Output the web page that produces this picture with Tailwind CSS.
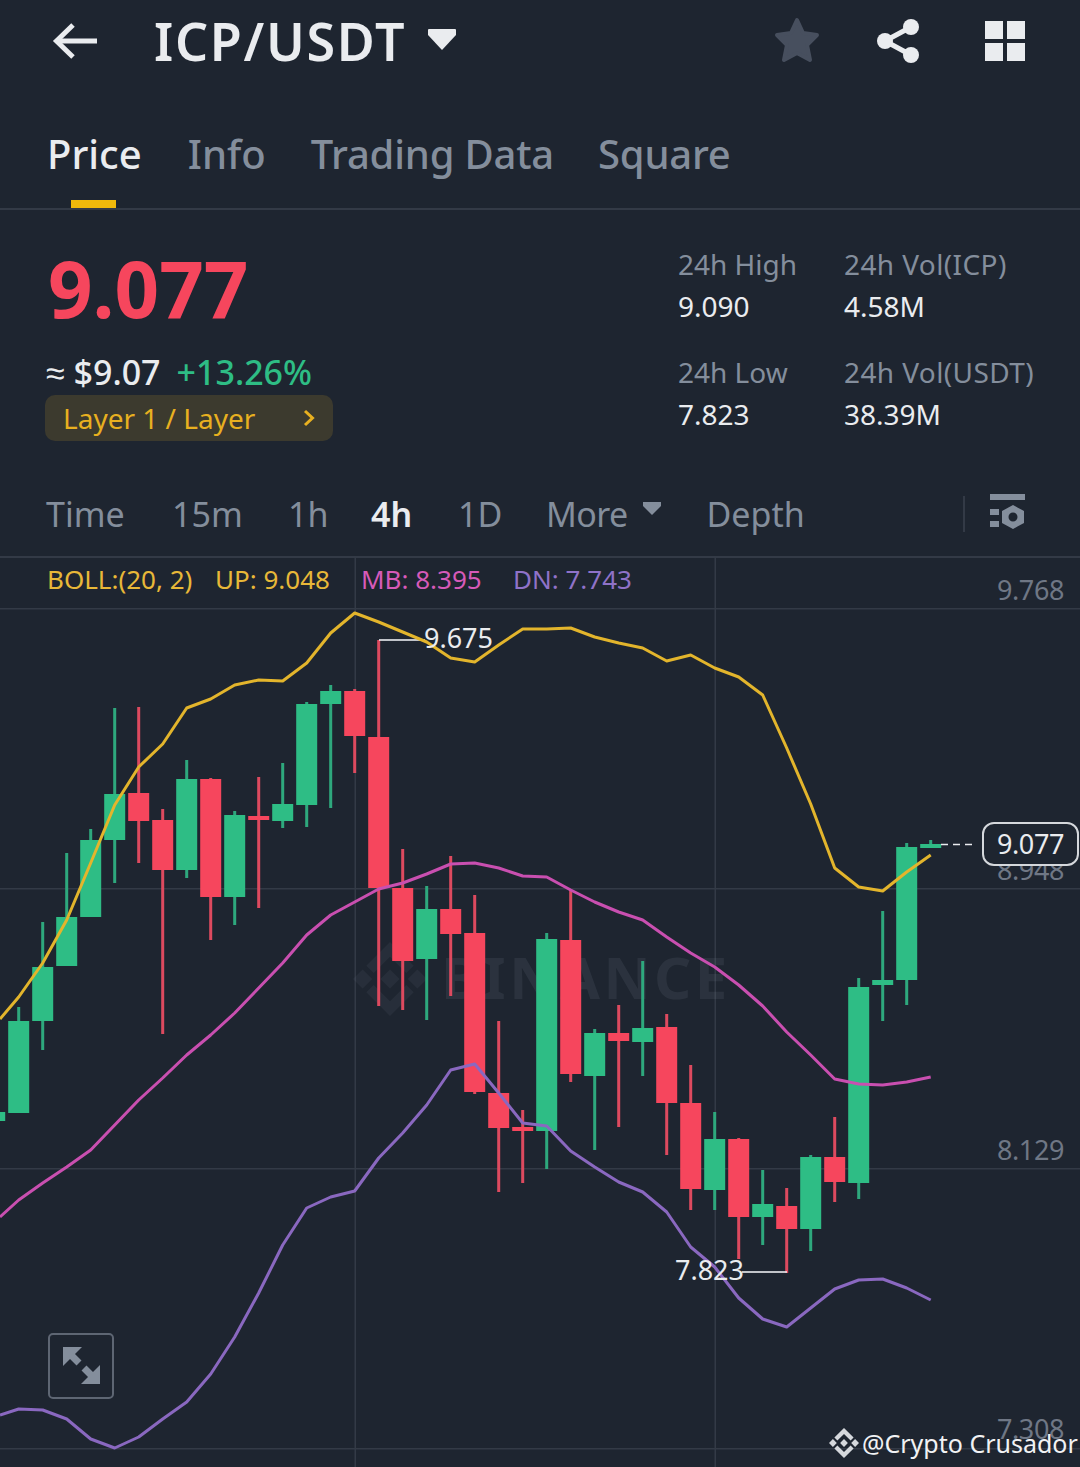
<!DOCTYPE html>
<html lang="en">

<head>
    <meta charset="UTF-8">
    <meta name="viewport" content="width=device-width, initial-scale=1.0">
    <title>ICP/USDT | Binance</title>
    <script src="https://cdn.jsdelivr.net/npm/@tailwindcss/browser@4"></script>
</head>

<body class="bg-[#1e2530] text-[#eaecef] font-['Noto_Sans',sans-serif] w-[1080px] h-[1467px] overflow-hidden">

    <!-- Header -->
    <header class="flex items-center h-[82px] pl-[52px] pr-[55px]">
        <svg class="w-[46px] h-[36px]" viewBox="0 0 46 36" fill="none" stroke="#eaecef" stroke-width="5">
            <path d="M45 18H5" />
            <path d="M21 2 4.500 18 21 34" />
        </svg>
        <h1 class="ml-[56px] text-[52px] font-semibold leading-none tracking-[1.7px]">ICP/USDT</h1>
        <svg class="ml-[22px] mb-[4px] w-[28px] h-[21px]" viewBox="0 0 28 21" fill="#eaecef">
            <path d="M1 0H27a1 1 0 0 1 1 1V6L14 21 0 6V1a1 1 0 0 1 1-1Z" />
        </svg>
        <div class="ml-auto flex items-center">
            <svg class="mb-[2px] w-[46px] h-[46px]" viewBox="0 0 46 46" fill="#474f5e" stroke="#474f5e" stroke-width="4" stroke-linejoin="round">
                <path d="M23 3 29 16 43 18 33 28 36 43 23 36 10 43 13 28 3 18 17 16Z" />
            </svg>
            <svg class="ml-[56px] w-[44px] h-[46px]" viewBox="0 0 44 46" fill="#eaecef" stroke="#eaecef">
                <path d="M9 23 35 9M9 23 35 37" stroke-width="5" />
                <circle cx="9" cy="23" r="8" stroke="none" />
                <circle cx="35" cy="9" r="8" stroke="none" />
                <circle cx="35" cy="37" r="8" stroke="none" />
            </svg>
            <div class="ml-[65px] grid grid-cols-2 gap-[4px]">
                <div class="w-[18px] h-[18px] bg-[#eaecef]"></div>
                <div class="w-[18px] h-[18px] bg-[#eaecef]"></div>
                <div class="w-[18px] h-[18px] bg-[#eaecef]"></div>
                <div class="w-[18px] h-[18px] bg-[#eaecef]"></div>
            </div>
        </div>
    </header>

    <!-- Tabs -->
    <nav class="relative flex items-center h-[128px] pt-[18px] pl-[47px] border-b-2 border-[#333a46] text-[40px] text-[#848e9c] font-medium">
        <a class="text-[#eaecef]">Price</a>
        <a class="ml-[46px]">Info</a>
        <a class="ml-[45px] tracking-[-0.2px]">Trading Data</a>
        <a class="ml-[44px] tracking-[-0.2px]">Square</a>
        <span class="absolute left-[71px] top-[118px] w-[45px] h-[8px] bg-[#f0b90b]"></span>
    </nav>

    <!-- Price stats -->
    <section class="flex h-[278px]">
        <div class="w-[678px] pl-[46px]">
            <div class="mt-[28px] ml-[2px] text-[78px] leading-[100px] font-bold text-[#f6465d]">9.077</div>
            <div class="mt-[14px] flex items-center h-[40px] text-[34px] font-medium">
                <span>≈ $9.07</span>
                <span class="ml-[16px] text-[#2ebd85]">+13.26%</span>
            </div>
            <div class="mt-[3px] -ml-[1px] flex items-center justify-between w-[288px] h-[46px] pl-[18px] pr-[18px] rounded-[10px] bg-[#3c3a2e] text-[28px] text-[#e8b020]">
                <span>Layer 1 / Layer</span>
                <svg class="w-[12px] h-[18px]" viewBox="0 0 12 18" fill="none" stroke="#e8b020" stroke-width="3">
                    <path d="M2 2 9.500 9 2 16" />
                </svg>
            </div>
        </div>
        <div class="grid grid-cols-[166px_auto] grid-rows-[108px_108px] pt-[34px] text-[28px] leading-[40px]">
            <div>
                <p class="text-[#848e9c]">24h High</p>
                <p class="mt-[2px]">9.090</p>
            </div>
            <div>
                <p class="text-[#848e9c] tracking-[0.4px]">24h Vol(ICP)</p>
                <p class="mt-[2px]">4.58M</p>
            </div>
            <div>
                <p class="text-[#848e9c]">24h Low</p>
                <p class="mt-[2px]">7.823</p>
            </div>
            <div>
                <p class="text-[#848e9c] tracking-[0.4px]">24h Vol(USDT)</p>
                <p class="mt-[2px]">38.39M</p>
            </div>
        </div>
    </section>

    <!-- Interval toolbar -->
    <div class="flex items-center h-[70px] pb-[16px] pl-[46px] pr-[54px] border-b-2 border-[#333a46] text-[34px] text-[#848e9c]">
        <span class="w-[126px]">Time</span>
        <span class="w-[116px]">15m</span>
        <span class="w-[83px]">1h</span>
        <span class="w-[87px] font-semibold text-[#eaecef]">4h</span>
        <span class="w-[88px]">1D</span>
        <span class="tracking-[-0.6px]">More</span>
        <svg class="ml-[15px] mb-[11px] w-[18px] h-[13px]" viewBox="0 0 18 13" fill="#848e9c">
            <path d="M0 0H18V4L9 13 0 4Z" />
        </svg>
        <span class="ml-[46px]">Depth</span>
        <div class="ml-auto w-[2px] h-[36px] bg-[#333a46]"></div>
        <svg class="ml-[25px] mb-[4px] w-[36px] h-[36px]" viewBox="0 0 36 36" fill="#848e9c">
            <rect x="0" y="0" width="35" height="6" />
            <rect x="0" y="15" width="9" height="6" />
            <rect x="0" y="27" width="9" height="6" />
            <path fill-rule="evenodd" d="M23 11 34 17V29L23 35 12 29V17ZM23 18.500a4.500 4.500 0 1 0 0 9 4.500 4.500 0 0 0 0-9Z" />
        </svg>
    </div>

    <!-- Chart -->
    <section class="relative h-[909px] overflow-hidden">
        <svg id="chart" class="absolute inset-0 w-[1080px] h-[909px]" viewBox="0 558 1080 909">
            <g fill="#848e9c" opacity="0.09" id="mark">
                <!-- Binance logo watermark -->
                <g transform="translate(390 979) scale(0.74)">
                    <path d="M0-13 13 0 0 13-13 0Z" />
                    <path d="M-37-13-24 0-37 13-50 0Z" />
                    <path d="M37-13 50 0 37 13 24 0Z" />
                    <path d="M0-50 32-18 22-8 0-30-22-8-32-18Z" />
                    <path d="M0 50 32 18 22 8 0 30-22 8-32 18Z" />
                </g>
            </g>
            <text x="441" y="999" font-family="Noto Sans" font-weight="700" font-size="58" letter-spacing="3.500" fill="#848e9c" opacity="0.13">BINANCE</text>
        </svg>

        <!-- Legend -->
        <div class="absolute left-[47px] top-[6px] flex text-[26px] leading-[30px]">
            <span class="w-[168px] text-[#e8b838]">BOLL:(20, 2)</span>
            <span class="w-[146px] text-[#e8b838]">UP: 9.048</span>
            <span class="w-[152px] text-[#d65ab8]">MB: 8.395</span>
            <span class="text-[#8f72c8]">DN: 7.743</span>
        </div>

        <!-- Price axis -->
        <span class="absolute right-[16px] top-[15px] text-[27px] leading-[34px] tracking-[-0.4px] text-[#6f7785]">9.768</span>
        <span class="absolute right-[16px] top-[295px] text-[27px] leading-[34px] tracking-[-0.4px] text-[#6f7785]">8.948</span>
        <span class="absolute right-[16px] top-[575px] text-[27px] leading-[34px] tracking-[-0.4px] text-[#6f7785]">8.129</span>
        <span class="absolute right-[16px] top-[854px] text-[27px] leading-[34px] tracking-[-0.4px] text-[#6f7785]">7.308</span>

        <!-- High / low markers -->
        <span class="absolute left-[424px] top-[63px] text-[27px] leading-[34px]">9.675</span>
        <span class="absolute left-[675px] top-[695px] text-[27px] leading-[34px]">7.823</span>

        <!-- Last price tag -->
        <div class="absolute left-[982px] top-[264px] flex items-center justify-center w-[97px] h-[44px] rounded-[12px] border-2 border-[#d5d8dc] bg-[#1e2530] text-[27px] tracking-[-0.4px]">9.077</div>

        <!-- Fullscreen button -->
        <button class="absolute left-[48px] top-[775px] w-[66px] h-[66px] rounded-[5px] border-2 border-[#5e6673]">
            <svg class="w-[62px] h-[62px]" viewBox="0 0 62 62" fill="#848e9c" stroke="#848e9c">
                <path d="M13 12H32L13 31Z" stroke="none" />
                <path d="M50 49H31L50 30Z" stroke="none" />
                <path d="M21 20 29 28M34 33 42 41" stroke-width="7" />
            </svg>
        </button>

        <!-- Watermark signature -->
        <div class="absolute left-[829px] top-[868px] flex items-center whitespace-nowrap text-[25px] leading-[34px] text-[#f1f2f4]">
            <svg class="w-[30px] h-[30px]" viewBox="-50 -50 100 100" fill="#d5d8dc">
                <path d="M0-13 13 0 0 13-13 0Z" />
                <path d="M-37-13-24 0-37 13-50 0Z" />
                <path d="M37-13 50 0 37 13 24 0Z" />
                <path d="M0-50 32-18 22-8 0-30-22-8-32-18Z" />
                <path d="M0 50 32 18 22 8 0 30-22 8-32 18Z" />
            </svg>
            <span class="ml-[3px]">@Crypto Crusador</span>
        </div>
    </section>

    <script>
        const svg = document.getElementById('chart');
        const NS = 'http://www.w3.org/2000/svg';

        const add = (name, attrs) => {
            const el = document.createElementNS(NS, name);
            Object.entries(attrs).forEach(([k, v]) => el.setAttribute(k, v));
            svg.appendChild(el);
            return el;
        };

        // x position of a candle slot (24px apart)
        const slotX = (i) => 18.7 + (i - 1) * 24;

        const hline = (y) => add('rect', { x: 0, y: y, width: 1080, height: 1.5, fill: '#333a46' });
        const vline = (x) => add('rect', { x: x, y: 558, width: 1.5, height: 909, fill: '#333a46' });

        // grid goes under the watermark
        const firstChild = svg.firstElementChild;
        [608, 888, 1168, 1448].forEach((y) => svg.insertBefore(hline(y), firstChild));
        [354.5, 714.5].forEach((x) => svg.insertBefore(vline(x), firstChild));

        // [up?, high, bodyTop, bodyBottom, low]
        const candles = [
            [1, 1112, 1112, 1121, 1121],
            [1, 1007, 1021, 1113, 1113],
            [1, 922, 967, 1021, 1050],
            [1, 853, 917, 966, 966],
            [1, 829, 840, 917, 917],
            [1, 708, 794, 840, 883],
            [0, 707, 793, 821, 863],
            [0, 809, 820, 870, 1034],
            [1, 760, 779, 870, 878],
            [0, 778, 779, 897, 940],
            [1, 811, 815, 897, 925],
            [0, 777, 816, 820, 908],
            [1, 763, 804, 821, 828],
            [1, 702, 704, 805, 827],
            [1, 685, 691, 704, 808],
            [0, 689, 691, 736, 773],
            [0, 640, 737, 888, 1006],
            [0, 849, 888, 961, 1010],
            [1, 886, 909, 959, 1020],
            [0, 856, 909, 934, 996],
            [0, 895, 933, 1092, 1094],
            [0, 1021, 1093, 1128, 1192],
            [0, 1110, 1127, 1131, 1183],
            [1, 933, 939, 1131, 1169],
            [0, 890, 940, 1074, 1082],
            [1, 1029, 1033, 1076, 1150],
            [0, 1005, 1033, 1041, 1127],
            [1, 961, 1028, 1042, 1076],
            [0, 1014, 1027, 1103, 1155],
            [0, 1065, 1103, 1189, 1210],
            [1, 1112, 1139, 1190, 1210],
            [0, 1138, 1139, 1217, 1259],
            [1, 1170, 1204, 1217, 1245],
            [0, 1188, 1206, 1229, 1273],
            [1, 1155, 1157, 1229, 1251],
            [0, 1117, 1157, 1182, 1202],
            [1, 978, 987, 1183, 1199],
            [1, 911, 980, 985, 1021],
            [1, 843, 847, 980, 1005],
            [1, 840, 844, 848, 848],
        ];

        candles.forEach(([up, high, top, bottom, low], n) => {
            const x = slotX(n);
            add('rect', { x: x - 1.5, y: high, width: 3, height: low - high, fill: up ? '#2ea87d' : '#dd4a5f' });
            add('rect', { x: x - 10.5, y: top, width: 21, height: bottom - top, fill: up ? '#2ebd85' : '#f6465d' });
        });

        // high / low marker leaders
        add('rect', { x: 379, y: 639.2, width: 46, height: 1.6, fill: '#eaecef' });
        add('rect', { x: 742, y: 1271.2, width: 45, height: 1.6, fill: '#eaecef' });

        // dashed line to last price tag
        add('line', { x1: 941, y1: 844.500, x2: 973, y2: 844.500, stroke: '#eaecef', 'stroke-width': 1.5, 'stroke-dasharray': '7 5' });

        const up = [997, 963, 920, 863, 805, 767, 744, 708, 699, 685, 680, 681, 663, 633, 613, 622, 632, 642, 658, 662, 645, 629, 629, 628, 637, 643, 648, 661, 655, 668, 677, 695, 748, 804, 868, 887, 891, 872, 855];
        const mb = [1200, 1183, 1167, 1150, 1125, 1100, 1078, 1055, 1035, 1013, 988, 963, 935, 915, 902, 889, 883, 874, 864, 863, 868, 876, 877, 890, 902, 912, 920, 937, 953, 967, 985, 1006, 1032, 1055, 1079, 1084, 1085, 1082, 1077];
        const dn = [1409, 1410, 1419, 1439, 1448, 1437, 1419, 1402, 1374, 1337, 1293, 1245, 1208, 1197, 1191, 1158, 1133, 1105, 1070, 1064, 1093, 1123, 1126, 1151, 1167, 1182, 1192, 1212, 1247, 1267, 1298, 1319, 1327, 1308, 1289, 1280, 1279, 1288, 1300];

        const drawLine = (values, startY, color) => {
            const pts = [[0, startY], ...values.map((y, i) => [slotX(i + 1), y])];
            add('polyline', {
                points: pts.map((p) => p.join(',')).join(' '),
                fill: 'none',
                stroke: color,
                'stroke-width': 3,
                'stroke-linejoin': 'round',
            });
        };

        drawLine(up, 1019, '#e3b52c');
        drawLine(mb, 1217, '#c94fb0');
        drawLine(dn, 1415, '#8a68c0');
    </script>
</body>

</html>
